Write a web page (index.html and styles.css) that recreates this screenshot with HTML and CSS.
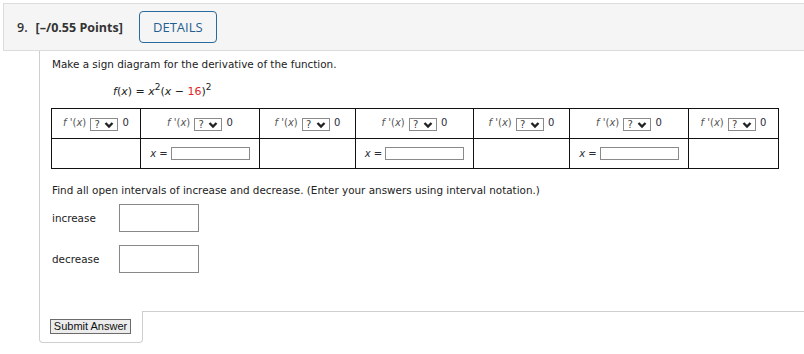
FILE: index.html
```html
<!DOCTYPE html>
<html>
<head>
<meta charset="utf-8">
<link rel="stylesheet" href="styles.css">
</head>
<body>
<div class="header">
  <span class="qnum">9.</span>
  <span class="points">[–/0.55 Points]</span>
  <span class="details">DETAILS</span>
</div>
<div class="question">
  <div class="main">
    <p class="prompt">Make a sign diagram for the derivative of the function.</p>
    <p class="formula"><i>f</i>(<i>x</i>) = <i>x</i><sup>2</sup>(<i>x</i> − <span class="red">16</span>)<sup>2</sup></p>
    <table class="sign">
      <colgroup>
        <col class="c1"><col class="c2"><col class="c3"><col class="c4"><col class="c5"><col class="c6"><col class="c7">
      </colgroup>
      <tr>
        <td><span class="fp"><i>f</i> '(<i>x</i>)</span> <span class="sel">?<svg class="chev" width="10" height="8" viewBox="0 0 10 8"><path d="M1.5 2 L5 5.5 L8.5 2" fill="none" stroke="#222" stroke-width="2.4"/></svg></span> 0</td>
        <td><span class="fp"><i>f</i> '(<i>x</i>)</span> <span class="sel">?<svg class="chev" width="10" height="8" viewBox="0 0 10 8"><path d="M1.5 2 L5 5.5 L8.5 2" fill="none" stroke="#222" stroke-width="2.4"/></svg></span> 0</td>
        <td><span class="fp"><i>f</i> '(<i>x</i>)</span> <span class="sel">?<svg class="chev" width="10" height="8" viewBox="0 0 10 8"><path d="M1.5 2 L5 5.5 L8.5 2" fill="none" stroke="#222" stroke-width="2.4"/></svg></span> 0</td>
        <td><span class="fp"><i>f</i> '(<i>x</i>)</span> <span class="sel">?<svg class="chev" width="10" height="8" viewBox="0 0 10 8"><path d="M1.5 2 L5 5.5 L8.5 2" fill="none" stroke="#222" stroke-width="2.4"/></svg></span> 0</td>
        <td><span class="fp"><i>f</i> '(<i>x</i>)</span> <span class="sel">?<svg class="chev" width="10" height="8" viewBox="0 0 10 8"><path d="M1.5 2 L5 5.5 L8.5 2" fill="none" stroke="#222" stroke-width="2.4"/></svg></span> 0</td>
        <td><span class="fp"><i>f</i> '(<i>x</i>)</span> <span class="sel">?<svg class="chev" width="10" height="8" viewBox="0 0 10 8"><path d="M1.5 2 L5 5.5 L8.5 2" fill="none" stroke="#222" stroke-width="2.4"/></svg></span> 0</td>
        <td><span class="fp"><i>f</i> '(<i>x</i>)</span> <span class="sel">?<svg class="chev" width="10" height="8" viewBox="0 0 10 8"><path d="M1.5 2 L5 5.5 L8.5 2" fill="none" stroke="#222" stroke-width="2.4"/></svg></span> 0</td>
      </tr>
      <tr>
        <td></td>
        <td><i>x</i> = <span class="xin"></span></td>
        <td></td>
        <td><i>x</i> = <span class="xin"></span></td>
        <td></td>
        <td><i>x</i> = <span class="xin"></span></td>
        <td></td>
      </tr>
    </table>
    <p class="find">Find all open intervals of increase and decrease. (Enter your answers using interval notation.)</p>
    <div class="answer first">
      <span class="lbl">increase</span>
      <span class="box"></span>
    </div>
    <div class="answer">
      <span class="lbl">decrease</span>
      <span class="box"></span>
    </div>
  </div>
  <div class="footer">
    <div class="submit-cell"><span class="submit">Submit Answer</span></div>
    <div class="filler"></div>
  </div>
</div>
</body>
</html>
```

FILE: styles.css
```css
html, body {
  margin: 0;
  padding: 0;
  background: #fff;
}
body {
  font-family: "DejaVu Sans", Verdana, sans-serif;
  color: #222;
  width: 804px;
  height: 354px;
  overflow: hidden;
}
.header {
  margin: 3px 0 0 3px;
  height: 46px;
  border: 1px solid #dcdcdc;
  border-right: none;
  background: #f5f5f5;
  display: flex;
  align-items: center;
  padding-left: 13px;
  font-family: "Open Sans", sans-serif;
  color: #333;
}
.qnum {
  font-size: 12.5px;
  font-weight: 600;
}
.points {
  font-size: 12.5px;
  font-weight: 700;
  margin-left: 8px;
}
.details {
  margin-left: 16px;
  box-sizing: border-box;
  width: 78px;
  height: 32px;
  border: 1px solid #2a6a9c;
  border-radius: 4px;
  color: #1f5f91;
  font-size: 13px;
  display: flex;
  align-items: center;
  justify-content: center;
}
.question {
  margin-left: 39px;
}
.main {
  border-left: 1px solid #cfcfcf;
  padding: 6px 0 0 11px;
  height: 254px;
}
.prompt {
  margin: 0 0 0 1px;
  font-size: 10.4px;
  line-height: 14px;
}
.formula {
  margin: 13px 0 0 62px;
  font-size: 11px;
  line-height: 16px;
}
.formula sup {
  font-size: 9px;
  line-height: 0;
  vertical-align: 5px;
}
.red {
  color: #e0261f;
}
.sign {
  margin-top: 8px;
  border-collapse: collapse;
  table-layout: fixed;
  width: 728px;
  font-size: 10px;
}
.sign td {
  border: 1px solid #111;
  height: 29px;
  padding: 0;
  text-align: center;
  vertical-align: middle;
  white-space: nowrap;
  color: #2b2b3a;
}
.c1 { width: 89px; }
.c2 { width: 119px; }
.c3 { width: 96px; }
.c4 { width: 118px; }
.c5 { width: 96px; }
.c6 { width: 119px; }
.c7 { width: 90px; }
.fp {
  color: #555;
}
.sel {
  display: inline-block;
  box-sizing: border-box;
  width: 28px;
  height: 13px;
  border: 1px solid #8a8a8a;
  font-size: 10px;
  line-height: 11px;
  text-align: left;
  padding-left: 3px;
  vertical-align: -2px;
  position: relative;
  color: #444;
  margin: 0 1px;
}
.chev {
  position: absolute;
  right: 3px;
  top: 2px;
}
.xin {
  display: inline-block;
  box-sizing: border-box;
  width: 79px;
  height: 13px;
  border: 1px solid #8a8a8a;
  vertical-align: -3px;
}
.find {
  margin: 14px 0 0 1px;
  font-size: 10.4px;
  line-height: 14px;
}
.answer {
  display: flex;
  align-items: center;
  margin-top: 13px;
  margin-left: 1px;
}
.answer.first {
  margin-top: 7px;
}
.lbl {
  width: 67px;
  font-size: 10.4px;
}
.box {
  box-sizing: border-box;
  width: 80px;
  height: 28px;
  border: 1px solid #888;
}
.footer {
  display: flex;
  align-items: flex-start;
}
.submit-cell {
  box-sizing: border-box;
  width: 104px;
  height: 32px;
  border: 1px solid #cfcfcf;
  border-top: none;
  border-radius: 0 0 4px 4px;
  padding: 8px 0 0 10px;
}
.submit {
  display: block;
  box-sizing: border-box;
  width: 81px;
  height: 15px;
  border: 1px solid #6b6b6b;
  background: #ececec;
  font-family: "Liberation Sans", Arial, sans-serif;
  font-size: 11px;
  line-height: 13px;
  text-align: center;
  color: #111;
}
.filler {
  flex: 1;
  border-top: 1px solid #cfcfcf;
}
```
